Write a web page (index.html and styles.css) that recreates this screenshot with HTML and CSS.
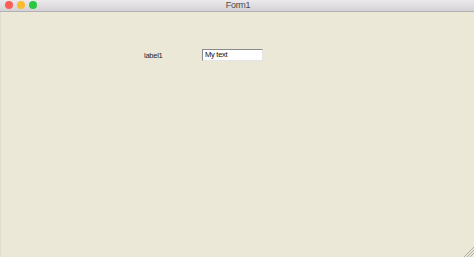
FILE: index.html
```html
<!DOCTYPE html>
<html>
<head>
<meta charset="utf-8">
<link rel="stylesheet" href="styles.css">
</head>
<body>
<div class="window">
  <div class="titlebar">
    <div class="lights">
      <span class="light red"></span>
      <span class="light yellow"></span>
      <span class="light green"></span>
    </div>
    <div class="title">Form1</div>
  </div>
  <div class="content">
    <div class="row">
      <span class="label">label1</span>
      <div class="textbox">My text</div>
    </div>
    <svg class="grip" width="11" height="11" viewBox="0 0 11 11">
      <line x1="1" y1="11" x2="11" y2="1" stroke="#b0ada3" stroke-width="1"/>
      <line x1="4" y1="11" x2="11" y2="4" stroke="#b0ada3" stroke-width="1"/>
      <line x1="7" y1="11" x2="11" y2="7" stroke="#b0ada3" stroke-width="1"/>
    </svg>
  </div>
</div>
</body>
</html>
```
FILE: styles.css
```css
html, body {
  margin: 0;
  padding: 0;
}
body {
  width: 474px;
  height: 257px;
  overflow: hidden;
  font-family: "Liberation Sans", Arial, sans-serif;
}
.window {
  width: 474px;
  height: 257px;
  display: flex;
  flex-direction: column;
  background: #ece8d8;
}
.titlebar {
  position: relative;
  height: 11px;
  background: linear-gradient(#ebe9eb, #d4d2d4);
  border-bottom: 1px solid #b3b1b3;
  display: flex;
  align-items: center;
  justify-content: center;
}
.lights {
  position: absolute;
  left: 5px;
  top: 1px;
  display: flex;
  gap: 4px;
}
.light {
  width: 8px;
  height: 8px;
  border-radius: 50%;
  display: block;
}
.red { background: #fc5f57; }
.yellow { background: #fdbc2e; }
.green { background: #28c840; }
.title {
  font-size: 9px;
  letter-spacing: -0.3px;
  color: #4a4a4a;
  line-height: 11px;
  margin-left: 2px;
}
.content {
  position: relative;
  flex: 1;
  border-left: 1px solid #e0ddd0;
  padding-top: 37px;
}
.row {
  display: flex;
  align-items: center;
  margin-left: 143px;
}
.label {
  width: 58px;
  font-size: 7.6px;
  letter-spacing: -0.3px;
  color: #222;
}
.textbox {
  width: 57px;
  height: 10px;
  background: #fff;
  border-top: 1px solid #8a8a8a;
  border-left: 1px solid #8a8a8a;
  border-right: 1px solid #e4e4e4;
  border-bottom: 1px solid #e4e4e4;
  font-size: 7.6px;
  letter-spacing: -0.3px;
  line-height: 10px;
  padding-left: 2px;
  color: #111;
}
.grip {
  position: absolute;
  right: 0;
  bottom: 0;
}
```
